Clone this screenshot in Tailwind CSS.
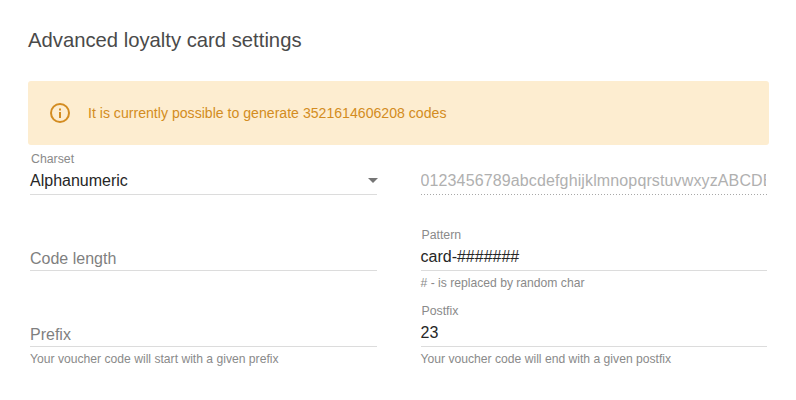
<!DOCTYPE html>
<html lang="en">
<head>
  <meta charset="UTF-8">
  <title>Advanced loyalty card settings</title>
  <script src="https://cdn.jsdelivr.net/npm/@tailwindcss/browser@4"></script>
</head>
<body class="bg-white font-['Liberation_Sans',sans-serif] w-[796px] h-[400px] overflow-hidden">
  <div class="pt-[28px] pl-[28px] pr-[27px]">
    <h1 class="text-[20.25px] leading-[24px] text-[#4a4a4a] font-normal">Advanced loyalty card settings</h1>

    <!-- banner -->
    <div class="mt-[29px] h-[64px] rounded-[3px] bg-[#fdedd0] flex items-center pl-[22px] gap-[18px] text-[#d38c21]">
      <svg class="w-[20px] h-[20px]" viewBox="0 0 20 20" fill="none">
        <circle cx="10" cy="10" r="9" stroke="#d38c21" stroke-width="2"/>
        <rect x="9" y="9" width="2" height="6" fill="#d38c21"/>
        <rect x="9" y="5.5" width="2" height="2" fill="#d38c21"/>
      </svg>
      <span class="text-[14.12px] leading-[20px]">It is currently possible to generate 3521614606208 codes</span>
    </div>

    <!-- fields -->
    <div class="mt-[7px] px-[2px] grid grid-cols-[347px_346.5px] gap-x-[43.5px] auto-rows-[76px]">
      <div>
        <div class="h-[14px] pl-[1px] text-[12.3px] leading-[14px] text-[#8a8a8a]">Charset</div>
        <div class="h-[29px] pt-[1px] flex items-center justify-between border-b border-[#dcdcdc] text-[16px] text-[#262626]">
          <span>Alphanumeric</span>
          <span class="mr-[-1px] w-0 h-0 border-x-[5px] border-x-transparent border-t-[5px] border-t-[#757575]"></span>
        </div>
      </div>
      <div>
        <div class="h-[14px]"></div>
        <div class="h-[28px] pt-[1px] mr-[1px] flex items-center text-[16px] tracking-[0.13px] text-[#b0b0b0] overflow-hidden whitespace-nowrap">0123456789abcdefghijklmnopqrstuvwxyzABCDEFGHIJKLMNOPQRSTUVWXYZ</div>
        <div class="h-[1px] bg-[linear-gradient(to_right,#a8a8a8_1px,transparent_1px)] bg-[length:3px_1px]"></div>
      </div>

      <div>
        <div class="h-[14px]"></div>
        <div class="h-[29px] pt-[6px] flex items-center border-b border-[#dcdcdc] text-[16px] text-[#7f7f7f]">Code length</div>
      </div>
      <div>
        <div class="h-[14px] pl-[1px] text-[12.3px] leading-[14px] text-[#8a8a8a]">Pattern</div>
        <div class="h-[29px] pt-[1px] flex items-center border-b border-[#dcdcdc] text-[16px] text-[#262626]">card-#######</div>
        <div class="mt-[5px] text-[12.15px] leading-[14px] text-[#8a8a8a]"># - is replaced by random char</div>
      </div>

      <div>
        <div class="h-[14px]"></div>
        <div class="h-[29px] pt-[6px] flex items-center border-b border-[#dcdcdc] text-[16px] text-[#7f7f7f]">Prefix</div>
        <div class="mt-[5px] text-[12.15px] leading-[14px] text-[#8a8a8a]">Your voucher code will start with a given prefix</div>
      </div>
      <div>
        <div class="h-[14px] pl-[1px] text-[12.3px] leading-[14px] text-[#8a8a8a]">Postfix</div>
        <div class="h-[29px] pt-[1px] flex items-center border-b border-[#dcdcdc] text-[16px] text-[#262626]">23</div>
        <div class="mt-[5px] text-[12.15px] leading-[14px] text-[#8a8a8a]">Your voucher code will end with a given postfix</div>
      </div>
    </div>
  </div>
</body>
</html>
